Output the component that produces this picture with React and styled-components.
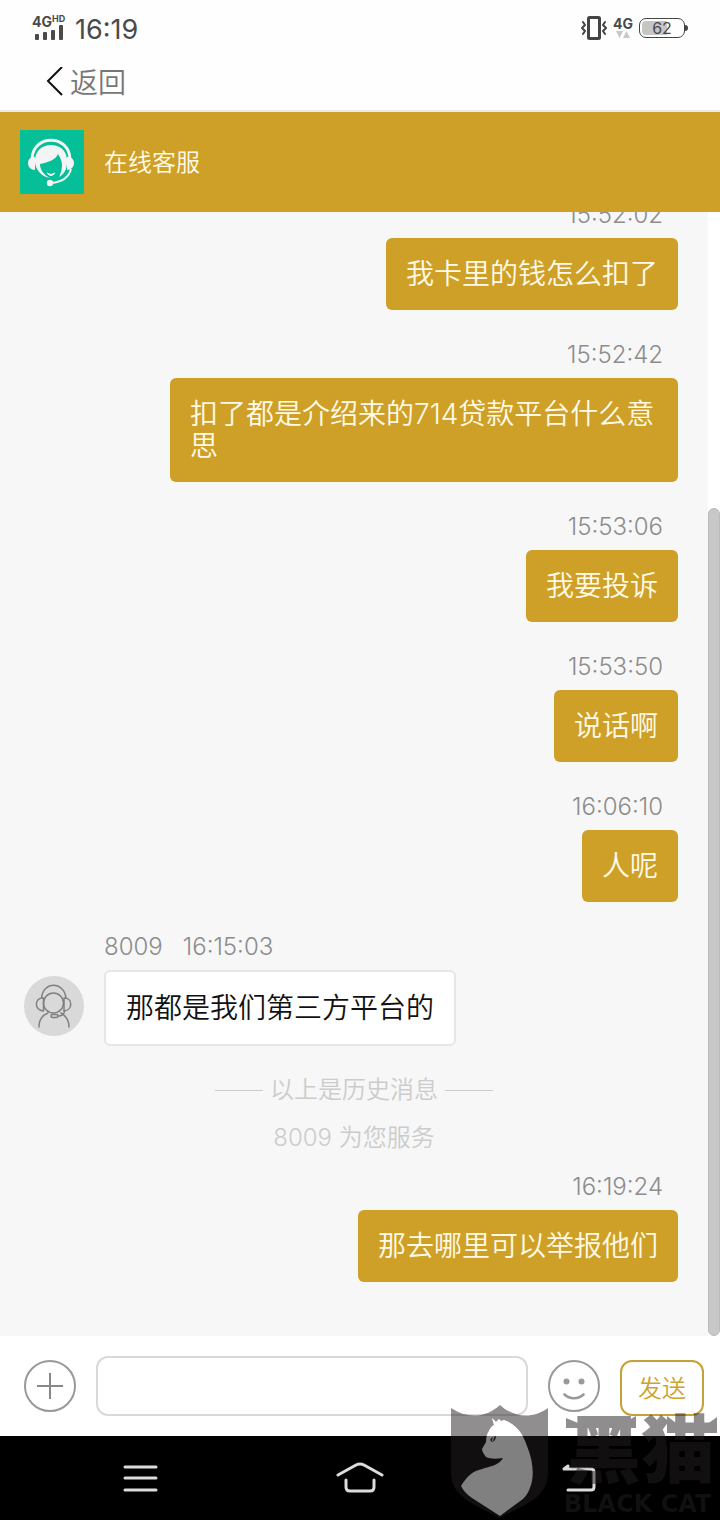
import React from "react";
import styled, { createGlobalStyle } from "styled-components";

const gold = "#cfa027";
const brandInk = "#221e1f";
const sans = `Inter, "Noto Sans CJK SC", sans-serif`;
const light = 350;

const GlobalStyle = createGlobalStyle`
  *, *::before, *::after { box-sizing: border-box; }
  body { margin: 0; background: #fff; font-family: ${sans}; }
  button, input { font: inherit; }
`;

const Screen = styled.div`
  position: relative;
  display: flex;
  flex-direction: column;
  height: 100vh;
  overflow: hidden;
  background: #fefefe;
`;

const StatusBar = styled.div`
  display: flex;
  justify-content: space-between;
  align-items: center;
  height: 56px;
  padding: 0 32px;
  color: #4a4a4a;
`;

const StatusGroup = styled.div`
  display: flex;
  align-items: center;
  gap: ${({ $gap }) => $gap}px;
`;

const Network = styled.div`
  display: flex;
  flex-direction: column;
  align-items: ${({ $align }) => $align || "flex-start"};
  font-size: 14px;
  font-weight: 700;
  line-height: 12px;
`;

const NetworkName = styled.span`
  display: flex;
  align-items: flex-start;
`;

const Hd = styled.span`
  font-size: 9px;
  line-height: 6px;
`;

const Clock = styled.span`
  padding-top: 4px;
  font-size: 27px;
  line-height: 32px;
`;

const Battery = styled.div`
  display: flex;
  align-items: center;
`;

const BatteryBody = styled.div`
  width: 46px;
  height: 20px;
  border: 1px solid #444;
  border-radius: 7px;
  padding: 2px;
`;

const BatteryLevel = styled.div`
  border-radius: 4px;
  background: linear-gradient(to right, #c6c6c6 62%, transparent 62%);
  font-size: 16px;
  line-height: 14px;
  text-align: center;
`;

const BatteryTip = styled.div`
  width: 3px;
  height: 6px;
  border-radius: 0 3px 3px 0;
  background: #444;
`;

const TitleBar = styled.nav`
  display: flex;
  align-items: center;
  height: 56px;
  padding: 0 44px;
  border-bottom: 2px solid #e9e9e9;
`;

const BackLink = styled.a`
  display: flex;
  align-items: center;
  gap: 4px;
  color: #777;
  font-size: 28px;
  font-weight: ${light};
  line-height: 32px;
  text-decoration: none;
`;

const AgentHeader = styled.header`
  display: flex;
  align-items: center;
  gap: 20px;
  height: 100px;
  flex-shrink: 0;
  padding: 0 20px;
  background: ${gold};
  color: #fffbe8;
`;

const AgentTitle = styled.h1`
  margin: 0;
  padding-top: 2px;
  font-size: 24px;
  font-weight: ${light};
  line-height: 32px;
`;

const Chat = styled.main`
  display: flex;
  flex: 1;
  min-height: 0;
  background: #f7f7f7;
`;

const MessageList = styled.div`
  display: flex;
  flex: 1;
  flex-direction: column;
  justify-content: flex-end;
  min-width: 0;
  padding: 0 30px 54px 24px;
  overflow: hidden;
`;

const Message = styled.article`
  display: flex;
  flex-shrink: 0;
  flex-direction: column;
  align-items: ${({ $incoming }) => ($incoming ? "flex-start" : "flex-end")};
  gap: 7px;
  padding-top: ${({ $tight }) => ($tight ? 8 : 29)}px;
`;

const Meta = styled.div`
  display: flex;
  gap: 20px;
  padding: ${({ $incoming }) => ($incoming ? "0 0 0 80px" : "0 15px 0 0")};
  color: #8c8c8c;
  font-size: 24px;
  font-weight: ${light};
  line-height: 32px;
`;

const IncomingRow = styled.div`
  display: flex;
  align-items: flex-start;
  gap: 20px;
`;

const Avatar = styled.div`
  display: flex;
  padding-top: 6px;
`;

const Bubble = styled.p`
  max-width: 508px;
  margin: 0;
  padding: 20px;
  border: ${({ $incoming }) => ($incoming ? "2px solid #e6e6e6" : "0")};
  border-radius: 6px;
  background: ${({ $incoming }) => ($incoming ? "#fff" : gold)};
  color: ${({ $incoming }) => ($incoming ? "#111" : "#fffbe8")};
  font-size: 28px;
  font-weight: ${light};
  line-height: 32px;
`;

const Notices = styled.div`
  flex-shrink: 0;
  padding: 20px 0 1px 6px;
  color: #ccc;
  font-size: 24px;
  font-weight: ${light};
  line-height: 48px;
`;

const Notice = styled.div`
  display: flex;
  align-items: center;
  justify-content: center;
  gap: 7px;
`;

const Rule = styled.span`
  width: 48px;
  height: 1px;
  background: #ccc;
`;

const ScrollTrack = styled.div`
  display: flex;
  flex-direction: column;
  width: 12px;
  background: #fff;
`;

const ScrollGap = styled.div`
  flex: 297;
`;

const ScrollThumb = styled.div`
  flex: 827;
  border: 1px solid #bbb;
  border-radius: 6px;
  background: #c8c8c8;
`;

const Composer = styled.form`
  display: flex;
  align-items: center;
  gap: 20px;
  flex-shrink: 0;
  height: 100px;
  padding: 20px 16px 20px 24px;
  background: #fff;
`;

const IconButton = styled.button`
  display: flex;
  flex-shrink: 0;
  padding: 0;
  border: 0;
  background: none;
`;

const MessageInput = styled.input`
  flex: 1;
  min-width: 0;
  height: 60px;
  padding: 0 16px;
  border: 2px solid #d9d9d9;
  border-radius: 12px;
  background: #fff;
  font-size: 28px;
  outline: 0;
`;

const SendButton = styled.button`
  align-self: flex-end;
  width: 84px;
  height: 56px;
  padding: 2px 0 0;
  border: 2px solid #c6a03b;
  border-radius: 12px;
  background: #fff;
  color: #cda42f;
  font-size: 24px;
  font-weight: ${light};
  line-height: 32px;
`;

const SystemNav = styled.nav`
  display: flex;
  align-items: center;
  justify-content: space-between;
  flex-shrink: 0;
  height: 84px;
  padding: 0 120px;
  background: #000;
`;

const Watermark = styled.div`
  position: absolute;
  right: 0;
  bottom: 0;
  display: flex;
  gap: 16px;
  width: 270px;
  height: 116px;
  pointer-events: none;
`;

const Brand = styled.div`
  position: relative;
  flex: 1;
  color: ${brandInk};
  opacity: 0.5;
  white-space: nowrap;
`;

const BrandName = styled.div`
  padding: 12px 0 0 3px;
  font-size: 74px;
  font-weight: 900;
  line-height: 68px;
`;

const BrandLatin = styled.div`
  padding-top: 4px;
  font-family: "DejaVu Sans", sans-serif;
  font-size: 24px;
  font-weight: 700;
  line-height: 32px;
`;

const Ears = styled.svg`
  position: absolute;
  top: 10px;
  left: 0;
`;

const outline = (color, width) => ({
  fill: "none",
  stroke: color,
  strokeWidth: width,
  strokeLinecap: "round",
  strokeLinejoin: "round",
});

function SignalBars() {
  return (
    <svg width="34" height="13" viewBox="0 0 34 13" fill="#4a4a4a" overflow="visible" aria-hidden="true">
      <rect x="3" y="6" width="4" height="6" rx="1" />
      <rect x="11" y="4" width="4" height="8" rx="1" />
      <rect x="19" y="2" width="4" height="10" rx="1" />
      <rect x="27" y="-3" width="4" height="15" rx="1" />
    </svg>
  );
}

function Vibrate() {
  return (
    <svg width="26" height="26" viewBox="0 0 26 26" aria-hidden="true">
      <rect x="7.500" y="2.500" width="11" height="21" rx="1" {...outline("#444", 3)} />
      <path d="m2 7 2 3-3 3 3 3-2 3M24 7l-2 3 3 3-3 3 2 3" {...outline("#444", 2)} />
    </svg>
  );
}

function DataArrows() {
  return (
    <svg width="14" height="9" viewBox="0 0 14 9" fill="#c8c8c8" aria-hidden="true">
      <path d="M0 1h7L3.500 8zM7 8h7l-3.500-7z" />
    </svg>
  );
}

function BackArrow() {
  return (
    <svg width="22" height="32" viewBox="0 0 22 32" aria-hidden="true">
      <path d="M18 0 4 14l14 14" fill="none" stroke="#111" strokeWidth="2" />
    </svg>
  );
}

function ServiceLogo() {
  return (
    <svg width="64" height="64" viewBox="0 0 64 64" aria-hidden="true">
      <path fill="#04bf97" d="M0 0h64v64H0z" />
      <path d="M12 29C13 4 49 4 50 29" fill="none" stroke="#f4f4f4" strokeWidth="3" />
      <path d="M15 27v13c-4 0-7-3-7-7s3-6 7-6zM47 27v13c4 0 7-3 7-7s-3-6-7-6z" fill="#f4f4f4" />
      <path
        fill="#f4f4f4"
        d="M15 33C14 21 22 15 31 15s17 6 16 18c0 7-4 12-8 14 2-4 3-8 3-12 0-4-2-8-4-11-2 5-8 8-18 10 0 6 4 11 10 14-8-1-14-8-15-15z"
      />
      <path d="M27 43q4 3 8 0-4 5-8 0z" fill="#f4f4f4" stroke="#f4f4f4" />
      <path d="M51 39c-2 8-9 13-20 14" fill="none" stroke="#f4f4f4" strokeWidth="2" />
      <circle cx="30" cy="53" r="3.200" fill="#f4f4f4" />
    </svg>
  );
}

function AgentAvatar() {
  return (
    <svg width="60" height="60" viewBox="0 0 60 60" aria-hidden="true">
      <circle cx="30" cy="30" r="30" fill="#d9d9d9" />
      <g {...outline("#808080", 1.5)}>
        <circle cx="29.500" cy="27" r="10" />
        <path d="M17.500 22C19 5 40 5 42 22M19.500 35V22c-9-1-10 12 0 13zM40 22v13c9-1 9-13 0-13" />
        <path d="M15 51c0-7 4-12 9-14M45 51c0-6-3-11-8-14M40.500 35c0 3-3 5-6 5" />
        <rect x="27" y="38.500" width="7" height="3" rx="1.500" />
      </g>
    </svg>
  );
}

function PlusIcon() {
  return (
    <svg width="52" height="52" viewBox="0 0 52 52" aria-hidden="true">
      <circle cx="26" cy="26" r="25" fill="none" stroke="#999" strokeWidth="2" />
      <path d="M26 13v26M13 26h26" fill="none" stroke="#888" strokeWidth="2" />
    </svg>
  );
}

function SmileIcon() {
  return (
    <svg width="52" height="52" viewBox="0 0 52 52" aria-hidden="true">
      <circle cx="26" cy="26" r="25" fill="none" stroke="#999" strokeWidth="2" />
      <circle cx="18.500" cy="21.500" r="3" fill="#999" />
      <circle cx="33.500" cy="21.500" r="3" fill="#999" />
      <path d="M16.500 34.500c5 5 14 5 19 0" {...outline("#999", 2.6)} />
    </svg>
  );
}

function NavIcon({ d, width }) {
  return (
    <svg width={width} height="32" viewBox={`0 0 ${width} 32`} aria-hidden="true">
      <path d={d} {...outline("#dcdcdc", 3)} />
    </svg>
  );
}

const catShape =
  "M42 14l4 4 3-3 2 2 3-1c13 5 19 14 23 26 5 12 7 25 5 35-2 9-5 14-9 18L50 112 22 94C16 90 13 86 11 82c6-10 12-15 21-17 8-3 16-3 21-11-7 1-13 1-17-1-2-3-4-5-4-8l4-7c0-5 1-8 3-11 1-3 3-5 5-6z";

function CatShield() {
  return (
    <svg width="98" height="116" viewBox="0 0 98 116" aria-hidden="true">
      <mask id="shield-mask">
        <path fill="#fff" d="M0 0h98v116H0z" />
        <path fill="#000" d={catShape} />
      </mask>
      <g mask="url(#shield-mask)">
        <path
          fill={brandInk}
          fillOpacity="0.5"
          d="M1 4c16 11 35 10 49-3 14 13 33 14 48 3v65c0 26-27 33-48 45C29 102 1 95 1 69z"
        />
      </g>
      <path fill="#fff" fillOpacity="0.5" d={catShape} />
      <path fill={brandInk} d="M40 36q1-3 6-4 0 5-4 6z" />
      <path fill="#888" d="M43 33l1 0-1 4-1 0z" />
    </svg>
  );
}

const earlierMessages = [
  { time: "15:52:02", text: "我卡里的钱怎么扣了" },
  { time: "15:52:42", text: "扣了都是介绍来的714贷款平台什么意思" },
  { time: "15:53:06", text: "我要投诉" },
  { time: "15:53:50", text: "说话啊" },
  { time: "16:06:10", text: "人呢" },
];

function OwnMessage({ time, text, tight }) {
  return (
    <Message $tight={tight}>
      <Meta><time>{time}</time></Meta>
      <Bubble>{text}</Bubble>
    </Message>
  );
}

export default function App() {
  return (
    <Screen>
      <GlobalStyle />
      <StatusBar>
        <StatusGroup $gap={9}>
          <Network>
            <NetworkName>4G<Hd>HD</Hd></NetworkName>
            <SignalBars />
          </Network>
          <Clock>16:19</Clock>
        </StatusGroup>
        <StatusGroup $gap={6}>
          <Vibrate />
          <Network $align="center">
            4G
            <DataArrows />
          </Network>
          <Battery>
            <BatteryBody><BatteryLevel>62</BatteryLevel></BatteryBody>
            <BatteryTip />
          </Battery>
        </StatusGroup>
      </StatusBar>
      <TitleBar>
        <BackLink href="#back"><BackArrow />返回</BackLink>
      </TitleBar>
      <AgentHeader>
        <ServiceLogo />
        <AgentTitle>在线客服</AgentTitle>
      </AgentHeader>
      <Chat>
        <MessageList>
          {earlierMessages.map((m) => <OwnMessage key={m.time} {...m} />)}
          <Message $incoming>
            <Meta $incoming><span>8009</span><time>16:15:03</time></Meta>
            <IncomingRow>
              <Avatar><AgentAvatar /></Avatar>
              <Bubble $incoming>那都是我们第三方平台的</Bubble>
            </IncomingRow>
          </Message>
          <Notices>
            <Notice><Rule />以上是历史消息<Rule /></Notice>
            <Notice>8009 为您服务</Notice>
          </Notices>
          <OwnMessage time="16:19:24" text="那去哪里可以举报他们" tight />
        </MessageList>
        <ScrollTrack>
          <ScrollGap />
          <ScrollThumb />
        </ScrollTrack>
      </Chat>
      <Composer onSubmit={(e) => e.preventDefault()}>
        <IconButton type="button" aria-label="更多"><PlusIcon /></IconButton>
        <MessageInput type="text" aria-label="消息" />
        <IconButton type="button" aria-label="表情"><SmileIcon /></IconButton>
        <SendButton type="submit">发送</SendButton>
      </Composer>
      <SystemNav>
        <IconButton type="button" aria-label="菜单">
          <NavIcon width={40} d="M5 5h31M5 16h31M5 28h31" />
        </IconButton>
        <IconButton type="button" aria-label="主页">
          <NavIcon width={48} d="M2 13 20 3q4-2 8 0l18 10M10 18v7q0 4 4 4h20q4 0 4-4v-7" />
        </IconButton>
        <IconButton type="button" aria-label="返回">
          <NavIcon width={40} d="M8 4 4 7h27q3 0 3 3v15q0 3-3 3H8" />
        </IconButton>
      </SystemNav>
      <Watermark>
        <CatShield />
        <Brand>
          <BrandName>黑猫</BrandName>
          <BrandLatin>BLACK CAT</BrandLatin>
          <Ears width="154" height="20" viewBox="0 0 154 20" aria-hidden="true">
            <path fill={brandInk} d="M2 4l12 5h46l12-7v12H2zM103 2l18 14h14l18-13v16h-50z" />
          </Ears>
        </Brand>
      </Watermark>
    </Screen>
  );
}
